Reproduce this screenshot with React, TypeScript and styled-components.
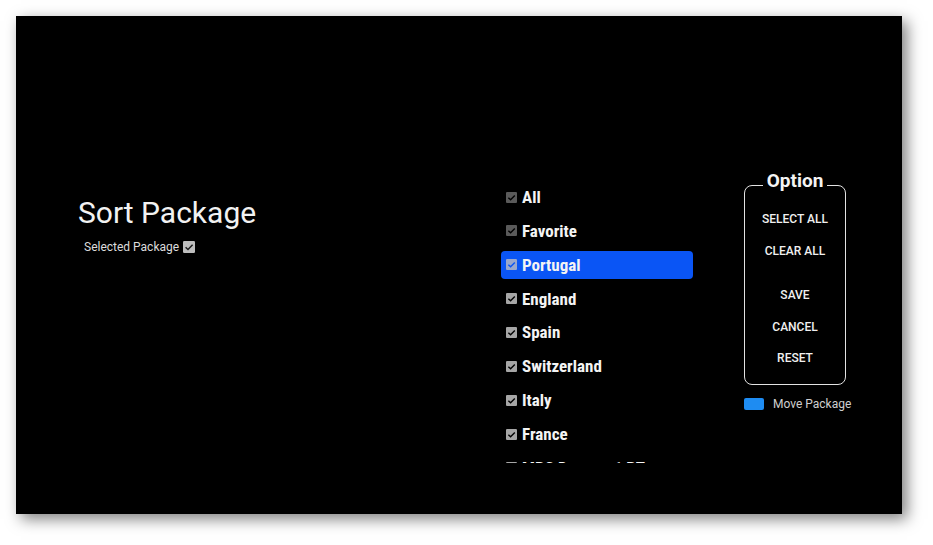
import React from 'react';
import styled, { createGlobalStyle } from 'styled-components';

const GlobalStyle = createGlobalStyle`
  html, body {
    margin: 0;
    padding: 0;
    background: #ffffff;
  }
  body {
    font-family: Roboto, "Liberation Sans", sans-serif;
  }
`;

const Page = styled.div`
  width: 933px;
  height: 545px;
  padding: 16px 0 0 16px;
  box-sizing: border-box;
`;

const Screen = styled.main`
  width: 886px;
  height: 498px;
  background: #000;
  box-shadow: 5px 5px 14px rgba(0, 0, 0, 0.5);
  display: flex;
  align-items: flex-start;
  overflow: hidden;
`;

const Header = styled.section`
  width: 485px;
  box-sizing: border-box;
  padding: 179px 0 0 62px;
  display: flex;
  flex-direction: column;
`;

const Title = styled.h1`
  margin: 0;
  font-family: Roboto, sans-serif;
  font-weight: 400;
  font-size: 30px;
  line-height: 36px;
  color: #f2f2f2;
`;

const SubRow = styled.div`
  margin: 8px 0 0 6px;
  height: 16px;
  display: flex;
  align-items: center;
  gap: 4px;
  font-size: 12px;
  color: #dcdcdc;
`;

const PackageList = styled.ul`
  list-style: none;
  margin: 167px 0 0 0;
  padding: 0;
  width: 192px;
  height: 280px;
  overflow: hidden;
  display: flex;
  flex-direction: column;
  gap: 5.86px;
`;

const PackageRow = styled.li<{ $active?: boolean }>`
  flex: none;
  height: 28px;
  border-radius: 4px;
  padding-left: 5px;
  display: flex;
  align-items: center;
  gap: 5px;
  background: ${(p) => (p.$active ? '#0a55f5' : 'transparent')};
  font-family: "Roboto Condensed", "DejaVu Sans Condensed", Roboto, sans-serif;
  font-weight: 700;
  font-size: 17px;
  color: #f4f4f4;
  white-space: nowrap;
`;

const OptionColumn = styled.aside`
  margin: 154px 0 0 51px;
  display: flex;
  flex-direction: column;
`;

const OptionBox = styled.fieldset`
  margin: 0;
  width: 102px;
  box-sizing: border-box;
  border: 1.5px solid #e2e2e2;
  border-radius: 8px;
  padding: 9px 0 16px;
  display: flex;
  flex-direction: column;
  align-items: center;
`;

const OptionLegend = styled.legend`
  margin: 0 auto;
  padding: 0 4px 8px;
  font-weight: 700;
  font-size: 19px;
  line-height: 22px;
  color: #f4f4f4;
`;

const OptionGroup = styled.div`
  display: flex;
  flex-direction: column;
  align-items: center;
  gap: 11.5px;
  & + & {
    margin-top: 24.5px;
  }
`;

const OptionItem = styled.div`
  height: 20px;
  line-height: 20px;
  font-weight: 500;
  font-size: 12px;
  color: #f0f0f0;
`;

const Legend = styled.div`
  margin-top: 13px;
  display: flex;
  align-items: center;
  gap: 9px;
  font-size: 12px;
  line-height: 12px;
  color: #cfcfcf;
  white-space: nowrap;
`;

const Swatch = styled.span`
  width: 20px;
  height: 12px;
  border-radius: 2px;
  background: #1e8cf2;
`;

const Check = ({
  size = 11,
  fill,
  mark,
}: {
  size?: number;
  fill: string;
  mark: string;
}) => (
  <svg width={size} height={size} viewBox="0 0 12 12" style={{ flex: 'none' }}>
    <rect x="0" y="0" width="12" height="12" rx="1.2" fill={fill} />
    <path
      d="M2.6 6.2 L5 8.5 L9.6 3.8"
      fill="none"
      stroke={mark}
      strokeWidth="1.5"
    />
  </svg>
);

const packages = [
  { name: 'All', dim: true },
  { name: 'Favorite', dim: true },
  { name: 'Portugal', active: true },
  { name: 'England' },
  { name: 'Spain' },
  { name: 'Switzerland' },
  { name: 'Italy' },
  { name: 'France' },
  { name: 'MBC Drama +1 PT' },
];

export default function App() {
  return (
    <>
      <GlobalStyle />
      <Page>
        <Screen>
          <Header>
            <Title>Sort Package</Title>
            <SubRow>
              Selected Package
              <Check size={12} fill="#bdbdbd" mark="#1a1a1a" />
            </SubRow>
          </Header>

          <PackageList>
            {packages.map((p) => (
              <PackageRow key={p.name} $active={p.active}>
                <Check
                  fill={p.active ? '#9aa8cc' : p.dim ? '#5a5a5a' : '#a6a6a6'}
                  mark={p.active ? '#0a55f5' : '#000'}
                />
                {p.name}
              </PackageRow>
            ))}
          </PackageList>

          <OptionColumn>
            <OptionBox>
              <OptionLegend>Option</OptionLegend>
              <OptionGroup>
                <OptionItem>SELECT ALL</OptionItem>
                <OptionItem>CLEAR ALL</OptionItem>
              </OptionGroup>
              <OptionGroup>
                <OptionItem>SAVE</OptionItem>
                <OptionItem>CANCEL</OptionItem>
                <OptionItem>RESET</OptionItem>
              </OptionGroup>
            </OptionBox>
            <Legend>
              <Swatch />
              Move Package
            </Legend>
          </OptionColumn>
        </Screen>
      </Page>
    </>
  );
}
